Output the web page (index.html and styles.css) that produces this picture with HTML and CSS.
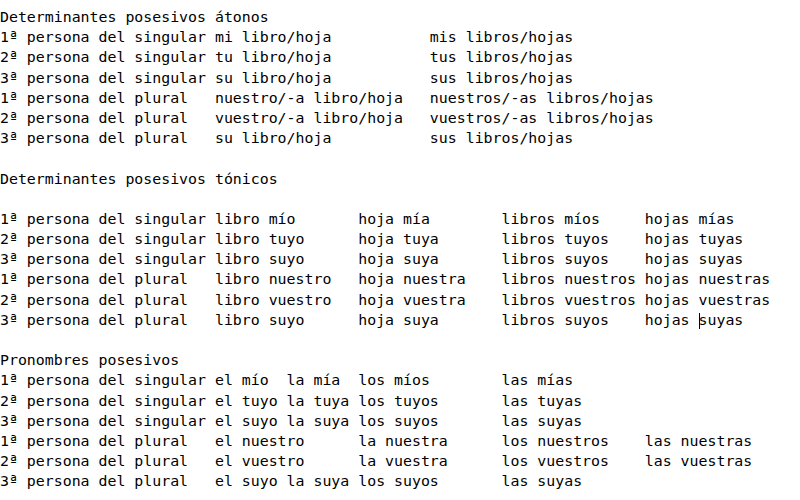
FILE: index.html
```html
<!DOCTYPE html>
<html lang="es">
<head>
<meta charset="utf-8">
<title>Posesivos</title>
<link rel="stylesheet" href="styles.css">
</head>
<body>
<pre class="doc">Determinantes posesivos átonos
1ª persona del singular mi libro/hoja           mis libros/hojas
2ª persona del singular tu libro/hoja           tus libros/hojas
3ª persona del singular su libro/hoja           sus libros/hojas
1ª persona del plural   nuestro/-a libro/hoja   nuestros/-as libros/hojas
2ª persona del plural   vuestro/-a libro/hoja   vuestros/-as libros/hojas
3ª persona del plural   su libro/hoja           sus libros/hojas

Determinantes posesivos tónicos

1ª persona del singular libro mío       hoja mía        libros míos     hojas mías
2ª persona del singular libro tuyo      hoja tuya       libros tuyos    hojas tuyas
3ª persona del singular libro suyo      hoja suya       libros suyos    hojas suyas
1ª persona del plural   libro nuestro   hoja nuestra    libros nuestros hojas nuestras
2ª persona del plural   libro vuestro   hoja vuestra    libros vuestros hojas vuestras
3ª persona del plural   libro suyo      hoja suya       libros suyos    hojas <span class="caret"></span>suyas

Pronombres posesivos
1ª persona del singular el mío  la mía  los míos        las mías
2ª persona del singular el tuyo la tuya los tuyos       las tuyas
3ª persona del singular el suyo la suya los suyos       las suyas
1ª persona del plural   el nuestro      la nuestra      los nuestros    las nuestras
2ª persona del plural   el vuestro      la vuestra      los vuestros    las vuestras
3ª persona del plural   el suyo la suya los suyos       las suyas</pre>
</body>
</html>
```

FILE: styles.css
```css
html, body {
  margin: 0;
  padding: 0;
  background: #ffffff;
}

body {
  padding-top: 7px;
}

.doc {
  margin: 0;
  font-family: "DejaVu Sans Mono", "Liberation Mono", monospace;
  font-size: 14.88px;
  line-height: 20.18px;
  color: #000000;
  white-space: pre;
}

.caret {
  position: relative;
}

.caret::before {
  content: "";
  position: absolute;
  left: 0;
  top: 2px;
  width: 1px;
  height: 16px;
  background: #000000;
}
```
